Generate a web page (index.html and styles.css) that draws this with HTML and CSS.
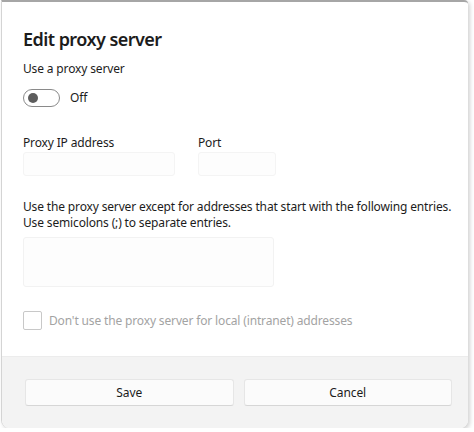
FILE: index.html
```html
<!DOCTYPE html>
<html lang="en">
<head>
<meta charset="utf-8">
<title>Edit proxy server</title>
<link rel="stylesheet" href="styles.css">
</head>
<body>
<div class="dialog">
  <div class="content">
    <h1 class="title">Edit proxy server</h1>
    <div class="label">Use a proxy server</div>
    <div class="toggle-row">
      <span class="toggle"><span class="knob"></span></span>
      <span class="toggle-text">Off</span>
    </div>
    <div class="fields">
      <div class="field ip">
        <div class="label">Proxy IP address</div>
        <div class="input"></div>
      </div>
      <div class="field port">
        <div class="label">Port</div>
        <div class="input"></div>
      </div>
    </div>
    <p class="desc">Use the proxy server except for addresses that start with the following entries.<br>Use semicolons (;) to separate entries.</p>
    <div class="textarea"></div>
    <label class="check-row">
      <span class="checkbox"></span>
      <span class="check-text">Don't use the proxy server for local (intranet) addresses</span>
    </label>
  </div>
  <div class="footer">
    <button class="btn">Save</button>
    <button class="btn">Cancel</button>
  </div>
</div>
</body>
</html>
```

FILE: styles.css
```css
html, body {
  margin: 0;
  background: #ffffff;
}

body {
  font-family: "Noto Sans", "Open Sans", sans-serif;
  color: #1c1c1c;
  font-size: 12px;
  letter-spacing: -0.15px;
}

.dialog {
  width: 466px;
  height: 426px;
  margin-left: 1px;
  border-top: 2px solid #a6a6a6;
  border-left: 1px solid #d4d4d4;
  border-radius: 0 4px 8px 8px;
  box-shadow: 2px 2px 4px rgba(0, 0, 0, 0.18);
  background: #ffffff;
  display: flex;
  flex-direction: column;
  overflow: hidden;
}

.content {
  flex: 1;
  padding: 24px 12px 0 21px;
}

.title {
  margin: 0;
  font-size: 18px;
  font-weight: 600;
  line-height: 26px;
  letter-spacing: -0.55px;
}

.label {
  line-height: 16px;
}

.title + .label {
  margin-top: 9px;
}

.toggle-row {
  display: flex;
  align-items: center;
  gap: 10px;
  margin-top: 12px;
}

.toggle {
  width: 31px;
  height: 16px;
  border: 1px solid #8a8a8a;
  border-radius: 9px;
  display: flex;
  align-items: center;
  padding-left: 4px;
  box-sizing: content-box;
}

.knob {
  width: 10px;
  height: 10px;
  border-radius: 50%;
  background: #5d5d5d;
}

.toggle-text {
  line-height: 16px;
}

.fields {
  display: flex;
  gap: 23px;
  margin-top: 28px;
}

.field .input {
  margin-top: 1px;
  height: 22px;
  border: 1px solid #f4f4f4;
  border-radius: 3px;
  background: #fdfdfd;
}

.ip {
  width: 152px;
}

.ip .input {
  width: 150px;
}

.port .input {
  width: 76px;
}

.desc {
  margin: 23px 0 0 0;
  line-height: 16px;
}

.textarea {
  margin-top: 6px;
  width: 249px;
  height: 48px;
  border: 1px solid #f2f2f2;
  border-radius: 3px;
  background: #fdfdfd;
}

.check-row {
  display: flex;
  align-items: center;
  gap: 7px;
  margin-top: 24px;
  color: #a3a3a3;
}

.checkbox {
  width: 17px;
  height: 17px;
  border: 1px solid #c8c8c8;
  border-radius: 2px;
}

.footer {
  height: 72px;
  background: #f3f3f3;
  border-top: 1px solid #ececec;
  display: flex;
  gap: 10px;
  padding: 22px 16px 0 23px;
  box-sizing: border-box;
}

.btn {
  flex: 1;
  height: 27px;
  font-family: inherit;
  font-size: 12px;
  letter-spacing: -0.1px;
  color: #1c1c1c;
  background: #fbfbfb;
  border: 1px solid #e6e6e6;
  border-bottom-color: #d6d6d6;
  border-radius: 3px;
}
```
